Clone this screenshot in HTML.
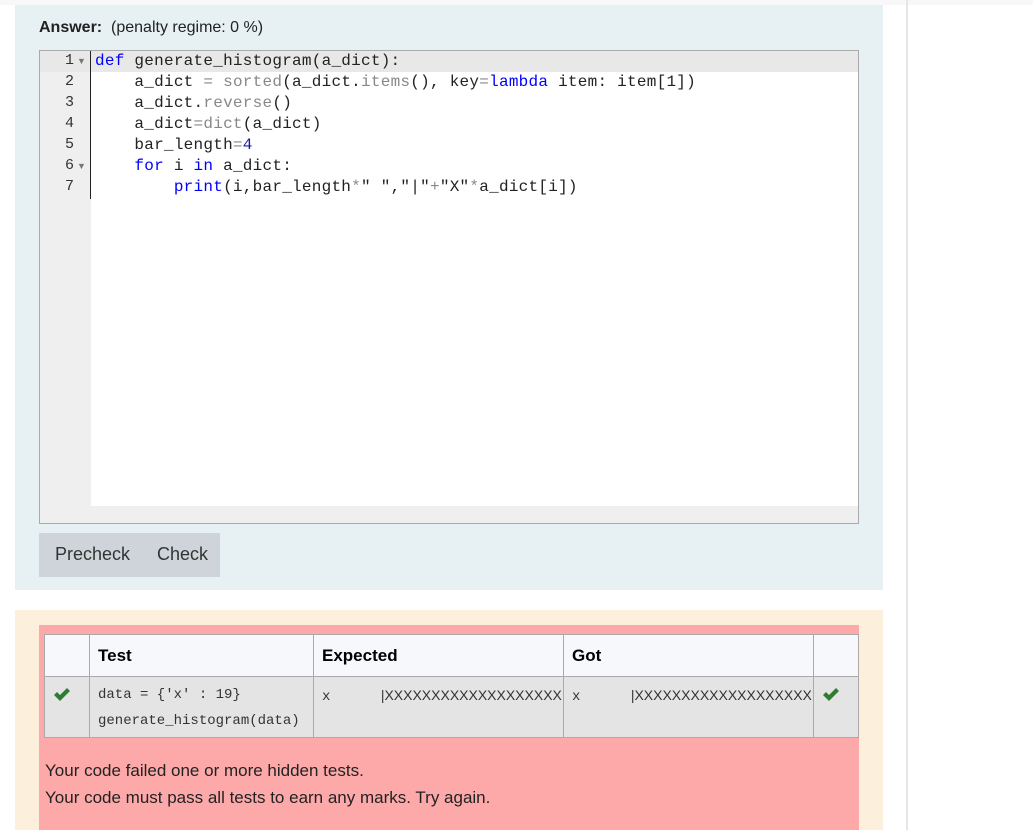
<!DOCTYPE html>
<html><head><style>
body{margin:0;width:1033px;height:830px;background:#fff;font-family:"Liberation Sans",sans-serif;position:relative;overflow:hidden}
.topline{position:absolute;left:0;top:0;width:1033px;height:5px;background:#f8f8f8}
.vline{position:absolute;left:906px;top:0;width:2px;height:830px;background:#e6e6e6}
.blue{position:absolute;left:15px;top:5px;width:868px;height:585px;background:#e7f1f4}
.ans{position:absolute;left:39px;top:19px;font-size:16px;color:#222}
.ed{position:absolute;left:39px;top:50px;width:818px;height:472px;border:1px solid #aaa;background:#efefef}
.white{position:absolute;left:51px;top:0;width:767px;height:455px;background:#fff}
.hl{position:absolute;left:0;top:0;width:818px;height:21px;background:#e8e8e8}
.gut{position:absolute;left:0;top:0;width:50px;border-right:1px solid #222;height:148px}
.code{position:absolute;left:0;top:0;font-family:"Liberation Mono",monospace;font-size:16px;letter-spacing:0.25px;line-height:21px;white-space:pre;color:#222}
.ln{position:absolute;left:0;width:34px;text-align:right;color:#333;font-family:"Liberation Mono",monospace;font-size:15px}
.arr{position:absolute;left:37px;font-size:9px;color:#777}
.k{color:#00f}.g{color:#888}.b{color:#1a1aa6}
.btn{position:absolute;left:39px;top:533px;width:181px;height:44px;background:#ced4da;font-size:18px;color:#333}
.or{position:absolute;left:15px;top:610px;width:868px;height:220px;background:#fcefdc}
.pink{position:absolute;left:39px;top:625px;width:820px;height:205px;background:#fea9a9}
table{position:absolute;left:44px;top:634px;border-collapse:collapse;font-size:17px;table-layout:fixed;width:815px}
td,th{border:1px solid #aaa;padding:0 8px;text-align:left;vertical-align:top;overflow:hidden;white-space:nowrap}
th{background:#f7f8fc;height:41px;vertical-align:middle;font-weight:bold}
tr.r td{background:#e4e4e4;height:55px;font-family:"Liberation Mono",monospace;font-size:14px;line-height:26px;padding-top:5px;color:#333}
.ck{position:relative}
.ck svg{position:absolute;left:8px;top:10px}
.msg{position:absolute;left:45px;top:757px;font-size:17px;line-height:27px;color:#222}
.xx{font-family:"Liberation Sans",sans-serif;font-size:14px}
</style></head><body>
<div class="topline"></div><div class="vline"></div>
<div class="blue"></div>
<div class="ans"><b>Answer:</b>&nbsp; (penalty regime: 0 %)</div>
<div class="ed">
 <div class="hl"></div>
 <div class="white" style="top:21px;height:434px"></div>
 <div class="gut"></div>
 <div class="ln" style="top:1px">1</div><div class="arr" style="top:5px">▼</div>
 <div class="ln" style="top:22px">2</div>
 <div class="ln" style="top:43px">3</div>
 <div class="ln" style="top:64px">4</div>
 <div class="ln" style="top:85px">5</div>
 <div class="ln" style="top:106px">6</div><div class="arr" style="top:110px">▼</div>
 <div class="ln" style="top:127px">7</div>
 <div class="code" style="left:55px;top:0"><span class="k">def</span> generate_histogram(a_dict):
    a_dict <span class="g">=</span> <span class="g">sorted</span>(a_dict.<span class="g">items</span>(), key<span class="g">=</span><span class="k">lambda</span> item: item[1])
    a_dict.<span class="g">reverse</span>()
    a_dict<span class="g">=</span><span class="g">dict</span>(a_dict)
    bar_length<span class="g">=</span><span class="b">4</span>
    <span class="k">for</span> i <span class="k">in</span> a_dict:
        <span class="k">print</span>(i,bar_length<span class="g">*</span>" ","|"<span class="g">+</span>"X"<span class="g">*</span>a_dict[i])</div>
</div>
<div class="btn"><span style="position:absolute;left:16px;top:11px">Precheck</span><span style="position:absolute;left:118px;top:11px">Check</span></div>
<div class="or"></div><div class="pink"></div>
<table>
<colgroup><col style="width:45px"><col style="width:224px"><col style="width:250px"><col style="width:250px"><col style="width:45px"></colgroup>
<tr><th></th><th>Test</th><th>Expected</th><th>Got</th><th></th></tr>
<tr class="r"><td class="ck"><svg width="18" height="15" viewBox="0 0 18 15"><path d="M1 8 L4 5 L7 8 L14 1 L17 4 L7 14 Z" fill="#2e7d32"/></svg></td><td>data = {'x' : 19}<br>generate_histogram(data)</td><td>x&nbsp;&nbsp;&nbsp;&nbsp;&nbsp;&nbsp;<span class="xx">|XXXXXXXXXXXXXXXXXXX</span></td><td>x&nbsp;&nbsp;&nbsp;&nbsp;&nbsp;&nbsp;<span class="xx">|XXXXXXXXXXXXXXXXXXX</span></td><td class="ck"><svg width="18" height="15" viewBox="0 0 18 15"><path d="M1 8 L4 5 L7 8 L14 1 L17 4 L7 14 Z" fill="#2e7d32"/></svg></td></tr>
</table>
<div class="msg">Your code failed one or more hidden tests.<br>Your code must pass all tests to earn any marks. Try again.</div>
</body></html>
